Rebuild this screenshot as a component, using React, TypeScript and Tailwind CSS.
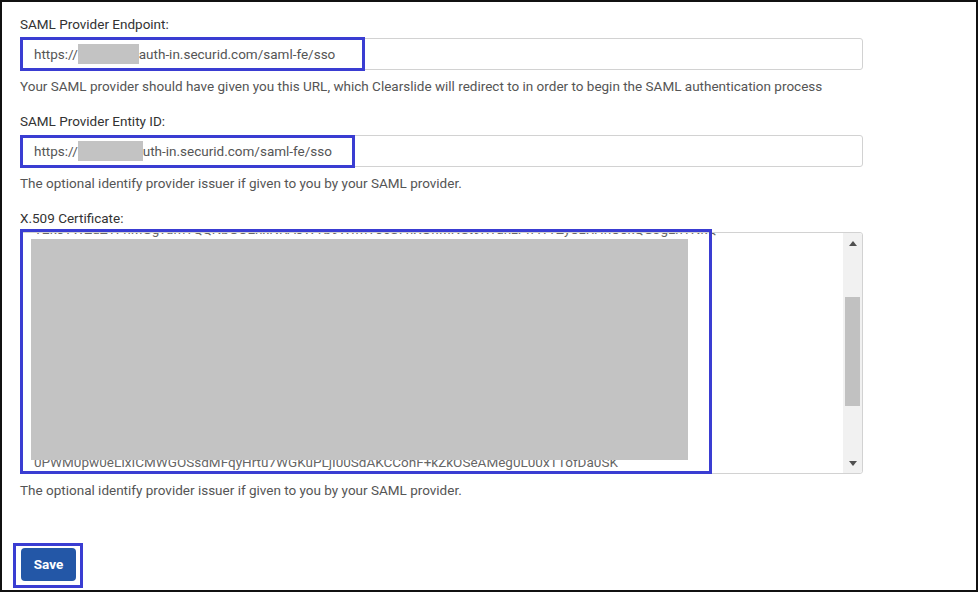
import React from 'react'

const font = "font-['Roboto','Liberation_Sans',sans-serif]"

function Label({ children }: { children: React.ReactNode }) {
  return <div className="text-[13.5px] leading-[16px] text-[#333]">{children}</div>
}

function Help({ children }: { children: React.ReactNode }) {
  return <div className="text-[13.5px] leading-[16px] text-[#555] mt-[8px]">{children}</div>
}

function Redacted({ width }: { width: string }) {
  return <span className={`inline-block h-[20px] bg-[#c3c3c3] align-middle ${width}`} />
}

export default function App() {
  return (
    <div className={`w-[979px] h-[593px] bg-white ${font}`}>
      <div className="w-[978px] h-[592px] border-2 border-[#111] pl-[18px] pt-[14px] box-border">
        {/* Endpoint */}
        <Label>SAML Provider Endpoint:</Label>
        <div className="relative mt-[6px] w-[843px] h-[32px] border border-[#d2d2d2] rounded-[3px] flex items-center pl-[13px] text-[13.5px] text-[#555]">
          <span>https://</span>
          <Redacted width="w-[61px]" />
          <span>auth-in.securid.com/saml-fe/sso</span>
          <div className="absolute -left-px -top-[2px] w-[345px] h-[34px] border-[3px] border-[#3a3dd2]" />
        </div>
        <Help>Your SAML provider should have given you this URL, which Clearslide will redirect to in order to begin the SAML authentication process</Help>

        {/* Entity ID */}
        <div className="mt-[19px]">
          <Label>SAML Provider Entity ID:</Label>
        </div>
        <div className="relative mt-[6px] w-[843px] h-[32px] border border-[#d2d2d2] rounded-[3px] flex items-center pl-[13px] text-[13.5px] text-[#555]">
          <span>https://</span>
          <Redacted width="w-[65px]" />
          <span>uth-in.securid.com/saml-fe/sso</span>
          <div className="absolute -left-px -top-px w-[335px] h-[33px] border-[3px] border-[#3a3dd2]" />
        </div>
        <Help>The optional identify provider issuer if given to you by your SAML provider.</Help>

        {/* Certificate */}
        <div className="mt-[19px]">
          <Label>X.509 Certificate:</Label>
        </div>
        <div className="relative mt-[6px] w-[843px] h-[242px] border border-[#d2d2d2] rounded-[3px] flex">
          <div className="flex-1 flex flex-col overflow-hidden pl-[13px] text-[13.5px] leading-[16px] text-[#666] whitespace-nowrap">
            <div className="-mt-[12px]">Y2k0YWZuZTFhMGgvdmYQQNbGOEnxNRAJWTb9WfmY0eS7nXGfIMNSt9R1ahzPh4vYZyUzRHhU0kQG3gLhTNkQ</div>
            <div className="flex-1" />
            <div className="mb-[3px]">0PWM0pw0eLIxICMWGOSsdMFqyHrtu7WGKuPLjI00SdAKCCohF+kZkOSeAMeg0L00xTTofDa0SK</div>
          </div>
          <div className="w-[19px] bg-[#f1f1f1] flex flex-col items-center rounded-r-[3px]">
            <div className="h-[17px] flex items-center justify-center mt-[2px]">
              <div className="w-0 h-0 border-l-[4px] border-r-[4px] border-b-[5px] border-l-transparent border-r-transparent border-b-[#505050]" />
            </div>
            <div className="h-[45px]" />
            <div className="w-[15px] h-[109px] bg-[#c1c1c1]" />
            <div className="flex-1" />
            <div className="h-[17px] flex items-center justify-center mb-[1px]">
              <div className="w-0 h-0 border-l-[4px] border-r-[4px] border-t-[5px] border-l-transparent border-r-transparent border-t-[#505050]" />
            </div>
          </div>
          <div className="absolute left-[10px] top-[6px] w-[657px] h-[221px] bg-[#c3c3c3]" />
          <div className="absolute -left-px -top-[4px] w-[692px] h-[245px] border-[3px] border-[#3a3dd2]" />
        </div>
        <Help>The optional identify provider issuer if given to you by your SAML provider.</Help>

        {/* Save */}
        <div className="relative mt-[50px] ml-px w-[55px]">
          <button className="w-[55px] h-[33px] bg-[#2357a7] rounded-[4px] text-white text-[13.5px] font-bold">
            Save
          </button>
          <div className="absolute -left-[8px] -top-[5px] w-[70px] h-[45px] border-[3px] border-[#3a3dd2]" />
        </div>
      </div>
    </div>
  )
}
